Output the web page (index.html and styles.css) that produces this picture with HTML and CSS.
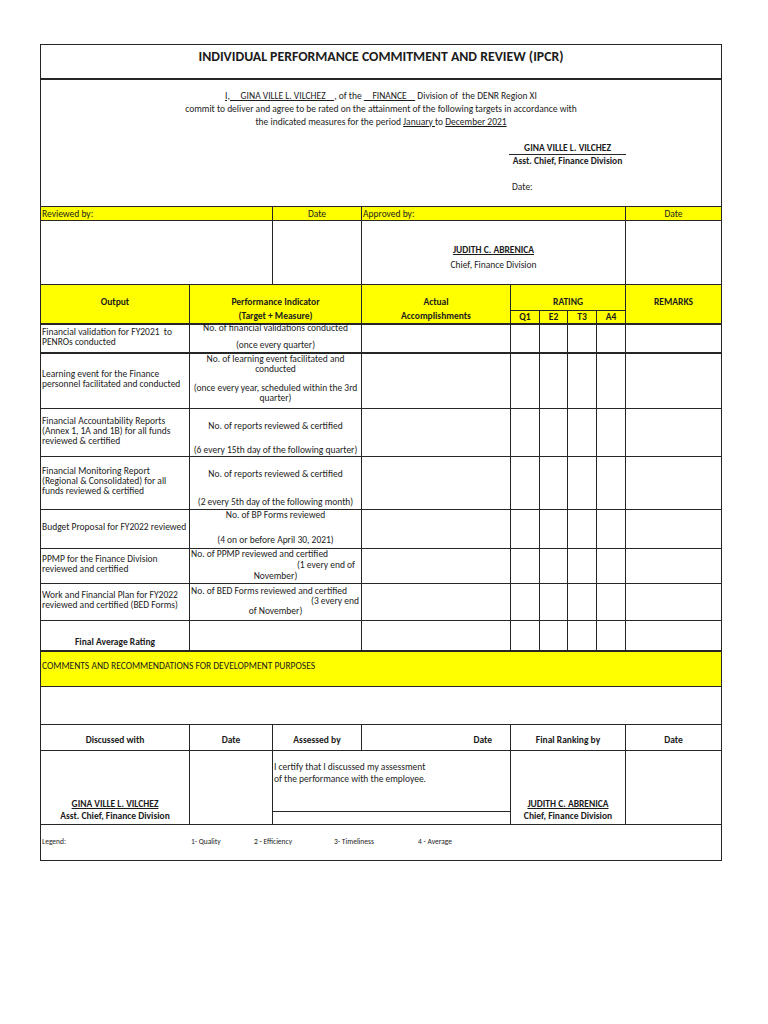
FILE: index.html
```html
<!DOCTYPE html>
<html lang="en">
<head>
<meta charset="utf-8">
<title>IPCR</title>
<link rel="stylesheet" href="styles.css">
</head>
<body>
<div class="sheet">
<table class="form">
  <colgroup>
    <col class="c1"><col class="c2"><col class="c3"><col class="c4">
    <col class="cq"><col class="ce"><col class="cq"><col class="cq"><col class="c9">
  </colgroup>

  <tr class="h-title"><td colspan="9" class="title">INDIVIDUAL PERFORMANCE COMMITMENT AND REVIEW (IPCR)</td></tr>

  <tr class="h-commit"><td colspan="9" class="commit">
    <div class="pledge">
      <div><span class="ul">I,&nbsp;&nbsp;&nbsp;&nbsp;&nbsp;GINA VILLE L. VILCHEZ&nbsp;&nbsp;&nbsp;&nbsp;</span>, of the <span class="ul">&nbsp;&nbsp;&nbsp;&nbsp;FINANCE&nbsp;&nbsp;&nbsp;&nbsp;</span> Division of &nbsp;the DENR Region XI</div>
      <div>commit to deliver and agree to be rated on the attainment of the following targets in accordance with</div>
      <div>the indicated measures for the period <span class="ul">January </span>to <span class="ul">December 2021</span></div>
    </div>
    <div class="signer">
      <div class="signer-name">GINA VILLE L. VILCHEZ</div>
      <div class="signer-role">Asst. Chief, Finance Division</div>
    </div>
    <div class="signer-date">Date:</div>
  </td></tr>

  <tr class="h-rev">
    <td colspan="2" class="yel left">Reviewed by:</td>
    <td class="yel center">Date</td>
    <td colspan="5" class="yel left">Approved by:</td>
    <td class="yel center">Date</td>
  </tr>
  <tr class="h-sig">
    <td colspan="2"></td>
    <td></td>
    <td colspan="5" class="approver">
      <div class="name-ul">JUDITH C. ABRENICA</div>
      <div>Chief, Finance Division</div>
    </td>
    <td></td>
  </tr>

  <tr class="h-head">
    <td rowspan="2" class="yel head">Output</td>
    <td rowspan="2" colspan="2" class="yel head">Performance Indicator<br>(Target + Measure)</td>
    <td rowspan="2" class="yel head">Actual<br>Accomplishments</td>
    <td colspan="4" class="yel head">RATING</td>
    <td rowspan="2" class="yel head">REMARKS</td>
  </tr>
  <tr class="h-sub">
    <td class="yel sub">Q1</td><td class="yel sub">E2</td><td class="yel sub">T3</td><td class="yel sub">A4</td>
  </tr>

  <tr class="h-r1 thick-top">
    <td class="out">Financial validation for FY2021 &nbsp;to<br>PENROs conducted</td>
    <td colspan="2" class="ind"><div class="a">No. of financial validations conducted</div><div class="b">(once every quarter)</div></td>
    <td></td><td></td><td></td><td></td><td></td><td></td>
  </tr>
  <tr class="h-r2 thick-top">
    <td class="out">Learning event for the Finance<br>personnel facilitated and conducted</td>
    <td colspan="2" class="ind"><div class="a">No. of learning event facilitated and<br>conducted</div><div class="b">(once every year, scheduled within the 3rd<br>quarter)</div></td>
    <td></td><td></td><td></td><td></td><td></td><td></td>
  </tr>
  <tr class="h-r3">
    <td class="out">Financial Accountability Reports<br>(Annex 1, 1A and 1B) for all funds<br>reviewed &amp; certified</td>
    <td colspan="2" class="ind"><div class="a">No. of reports reviewed &amp; certified</div><div class="b">(6 every 15th day of the following quarter)</div></td>
    <td></td><td></td><td></td><td></td><td></td><td></td>
  </tr>
  <tr class="h-r4">
    <td class="out">Financial Monitoring Report<br>(Regional &amp; Consolidated) for all<br>funds reviewed &amp; certified</td>
    <td colspan="2" class="ind"><div class="a">No. of reports reviewed &amp; certified</div><div class="b">(2 every 5th day of the following month)</div></td>
    <td></td><td></td><td></td><td></td><td></td><td></td>
  </tr>
  <tr class="h-r5">
    <td class="out">Budget Proposal for FY2022 reviewed</td>
    <td colspan="2" class="ind"><div class="a">No. of BP Forms reviewed</div><div class="b">(4 on or before April 30, 2021)</div></td>
    <td></td><td></td><td></td><td></td><td></td><td></td>
  </tr>
  <tr class="h-r6">
    <td class="out">PPMP for the Finance Division<br>reviewed and certified</td>
    <td colspan="2" class="ind split"><div class="l">No. of PPMP reviewed and certified</div><div class="r">(1 every end of</div><div class="m">November)</div></td>
    <td></td><td></td><td></td><td></td><td></td><td></td>
  </tr>
  <tr class="h-r7">
    <td class="out">Work and Financial Plan for FY2022<br>reviewed and certified (BED Forms)</td>
    <td colspan="2" class="ind split"><div class="l">No. of BED Forms reviewed and certified</div><div class="r">(3 every end</div><div class="m">of November)</div></td>
    <td></td><td></td><td></td><td></td><td></td><td></td>
  </tr>
  <tr class="h-final">
    <td class="final">Final Average Rating</td>
    <td colspan="2"></td>
    <td></td><td></td><td></td><td></td><td></td><td></td>
  </tr>

  <tr class="h-comm thick-top"><td colspan="9" class="yel comments">COMMENTS AND RECOMMENDATIONS FOR DEVELOPMENT PURPOSES</td></tr>
  <tr class="h-blank"><td colspan="9"></td></tr>

  <tr class="h-dhead">
    <td class="dh">Discussed with</td>
    <td class="dh">Date</td>
    <td class="dh">Assessed by</td>
    <td class="dh dh-right">Date</td>
    <td colspan="4" class="dh">Final Ranking by</td>
    <td class="dh">Date</td>
  </tr>
  <tr class="h-siga">
    <td rowspan="2" class="sigcell"><div class="name-ul">GINA VILLE L. VILCHEZ</div><div>Asst. Chief, Finance Division</div></td>
    <td rowspan="2"></td>
    <td colspan="2" class="certify">I certify that I discussed my assessment<br>of the performance with the employee.</td>
    <td colspan="4" rowspan="2" class="sigcell"><div class="name-ul">JUDITH C. ABRENICA</div><div>Chief, Finance Division</div></td>
    <td rowspan="2"></td>
  </tr>
  <tr class="h-sigb"><td colspan="2"></td></tr>

  <tr class="h-legend"><td colspan="9" class="legend">
    <div class="legend-row">
      <span class="lg-0">Legend:</span>
      <span class="lg-1">1- Quality</span>
      <span class="lg-2">2 - Efficiency</span>
      <span class="lg-3">3- Timeliness</span>
      <span class="lg-4">4 - Average</span>
    </div>
  </td></tr>
</table>
</div>
</body>
</html>
```

FILE: styles.css
```css
* { box-sizing: border-box; }
html, body { margin: 0; padding: 0; background: #fff; }
body {
  font-family: Carlito, Lato, "Open Sans", sans-serif;
  color: #1c1c1c;
  font-size: 9.5px;
}
.sheet { padding: 44px 0 0 40px; }

.form {
  border-collapse: collapse;
  table-layout: fixed;
  width: 682px;
}
.form td {
  border: 1px solid #262626;
  padding: 0;
  font-size: 9.5px;
  line-height: 10px;
  vertical-align: middle;
}
col.c1 { width: 149px; }
col.c2 { width: 83px; }
col.c3 { width: 89px; }
col.c4 { width: 149px; }
col.cq { width: 29px; }
col.ce { width: 28px; }
col.c9 { width: 96px; }

.yel { background: #ffff00; }
.left { text-align: left; padding-left: 1px !important; }
.center { text-align: center; }

/* row heights */
.h-title td { height: 34px; }
.h-commit td { height: 128px; }
.h-rev td { height: 14px; }
.h-sig td { height: 64px; }
.h-head td { height: 25px; }
.h-sub td { height: 12px; }
.h-r1 td { height: 29px; }
.h-r2 td { height: 55px; }
.h-r3 td { height: 48px; }
.h-r4 td { height: 53px; }
.h-r5 td { height: 39px; }
.h-r6 td { height: 35px; }
.h-r7 td { height: 37px; }
.h-final td { height: 31px; }
.h-comm td { height: 35px; }
.h-blank td { height: 38px; }
.h-dhead td { height: 26px; }
.h-siga td { height: 61px; }
.h-sigb td { height: 13px; }
.h-legend td { height: 36px; }

.thick-top td { border-top-width: 2px; }
.h-commit td { border-top-width: 2px; }

/* title */
.title {
  font-size: 13.8px !important;
  font-weight: 700;
  text-align: center;
  vertical-align: top !important;
  line-height: 16px !important;
  padding-top: 4px !important;
}

/* commitment */
.commit {
  vertical-align: top !important;
  padding-top: 10px !important;
}
.pledge {
  text-align: center;
  line-height: 13px;
}
.ul { text-decoration: underline; }
.signer {
  margin: 14px 0 0 468px;
  width: 117px;
  text-align: center;
  line-height: 11px;
}
.signer-name {
  font-weight: 700;
  border-bottom: 1px solid #262626;
}
.signer-role { font-weight: 700; margin-top: 1px; }
.signer-date {
  margin: 15px 0 0 471px;
  line-height: 11px;
}

/* approver */
.approver {
  text-align: center;
  vertical-align: top !important;
  padding-top: 22px !important;
  line-height: 15px !important;
}
.name-ul { font-weight: 700; text-decoration: underline; }

/* headers */
.head {
  font-weight: 700;
  text-align: center;
  vertical-align: top !important;
  padding-top: 10px !important;
  line-height: 14px !important;
}
.sub {
  font-weight: 700;
  text-align: center;
  line-height: 11px !important;
}

/* data rows */
.out { padding-left: 1px !important; padding-bottom: 3px !important; white-space: nowrap; }
.ind {
  text-align: center;
  vertical-align: top !important;
  white-space: nowrap;
}
.h-r1 .ind .a { margin-top: -2px; }
.h-r1 .ind .b { margin-top: 7px; }
.h-r2 .ind .a { margin-top: 0; }
.h-r2 .ind .b { margin-top: 9px; }
.h-r3 .ind .a { margin-top: 12px; }
.h-r3 .ind .b { margin-top: 14px; }
.h-r4 .ind .a { margin-top: 12px; }
.h-r4 .ind .b { margin-top: 18px; }
.h-r5 .ind .a { margin-top: 0; }
.h-r5 .ind .b { margin-top: 15px; }
.split .l { text-align: left; padding-left: 1px; }
.split .r { text-align: right; }
.split .m { text-align: center; }
.h-r6 .split { line-height: 11px !important; }
.h-r6 .split .r { padding-right: 6px; }
.h-r7 .split { padding-top: 2px !important; }
.h-r7 .split .r { padding-right: 2px; }

.final {
  font-weight: 700;
  text-align: center;
  vertical-align: bottom !important;
  padding-bottom: 3px !important;
}

.comments {
  vertical-align: top !important;
  padding: 8px 0 0 1px !important;
  line-height: 12px !important;
}

/* bottom block */
.dh {
  font-weight: 700;
  text-align: center;
  vertical-align: bottom !important;
  padding-bottom: 4px !important;
  line-height: 12px !important;
}
.dh-right { text-align: right; padding-right: 18px !important; }
.sigcell {
  text-align: center;
  vertical-align: bottom !important;
  font-weight: 700;
  line-height: 12px !important;
  padding-bottom: 2px !important;
}
.certify {
  vertical-align: top !important;
  padding: 10px 0 0 1px !important;
  line-height: 12px !important;
}

.legend { vertical-align: middle; }
.legend-row {
  display: flex;
  font-size: 7.5px;
  line-height: 10px;
}
.legend-row span { display: block; }
.lg-0 { width: 150px; padding-left: 1px; }
.lg-1 { width: 63px; }
.lg-2 { width: 80px; }
.lg-3 { width: 84px; }
```
